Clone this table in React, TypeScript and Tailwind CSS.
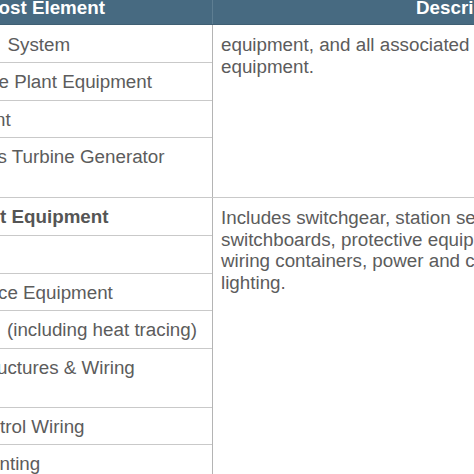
import React from "react";

type Row = { text: string; h: string; ml: string; pt: string; bold?: boolean };

const group1: Row[] = [
  { text: "System", h: "h-[38px]", ml: "ml-[7.5px]", pt: "pt-[9px]" },
  { text: "e Plant Equipment", h: "h-[38px]", ml: "ml-[-1.5px]", pt: "pt-[8px]" },
  { text: "nt", h: "h-[37px]", ml: "ml-[-5px]", pt: "pt-[8px]" },
  { text: "s Turbine Generator", h: "h-[59px]", ml: "ml-[-2.5px]", pt: "pt-[8px]" },
];

const group2: Row[] = [
  { text: "t Equipment", h: "h-[38px]", ml: "ml-[0px]", pt: "pt-[8px]", bold: true },
  { text: "", h: "h-[38px]", ml: "ml-[0px]", pt: "pt-[8px]" },
  { text: "ce Equipment", h: "h-[37px]", ml: "ml-[-2px]", pt: "pt-[8px]" },
  { text: "(including heat tracing)", h: "h-[38px]", ml: "ml-[7px]", pt: "pt-[8px]" },
  { text: "uctures & Wiring", h: "h-[59px]", ml: "ml-[-3px]", pt: "pt-[8px]" },
  { text: "trol Wiring", h: "h-[37px]", ml: "ml-[0px]", pt: "pt-[8px]" },
  { text: "nting", h: "h-[60px]", ml: "ml-[-0.5px]", pt: "pt-[8px]" },
];

function LeftRows({ rows, last }: { rows: Row[]; last?: boolean }) {
  return (
    <div className="w-[213px] shrink-0 border-r border-[#b4b4b4] overflow-hidden">
      {rows.map((r, i) => (
        <div
          key={i}
          className={`${r.h} ${r.pt} ${
            last && i === rows.length - 1 ? "" : "border-b border-[#c9c9c9]"
          } overflow-hidden`}
        >
          <div
            className={`${r.ml} whitespace-nowrap ${
              r.bold ? "font-bold text-[#555555]" : "text-[#5c5c5c]"
            }`}
          >
            {r.text}
          </div>
        </div>
      ))}
    </div>
  );
}

export default function App() {
  return (
    <div
      className="w-[474px] h-[474px] overflow-hidden bg-white text-[18.8px] leading-[21.6px]"
      style={{ fontFamily: '"Liberation Sans", Arial, sans-serif' }}
    >
      {/* header */}
      <div className="flex h-[25px] bg-[#476a81] border-b border-[#3f5f73]">
        <div className="w-[213px] shrink-0 border-r border-[#5e7e92] overflow-hidden">
          <div className="mt-[-3px] ml-[-1.5px] whitespace-nowrap font-bold text-white">
            ost Element
          </div>
        </div>
        <div className="flex-1 overflow-hidden">
          <div className="mt-[-3px] pl-[203px] whitespace-nowrap font-bold text-white">
            Description
          </div>
        </div>
      </div>

      {/* group 1 */}
      <div className="flex border-b border-[#c9c9c9]">
        <LeftRows rows={group1} last />
        <div className="flex-1 overflow-hidden pl-[8px] pt-[9px] text-[#5c5c5c] whitespace-nowrap">
          equipment, and all associated
          <br />
          equipment.
        </div>
      </div>

      {/* group 2 */}
      <div className="flex">
        <LeftRows rows={group2} last />
        <div className="flex-1 overflow-hidden pl-[8px] pt-[9px] text-[#5c5c5c] whitespace-nowrap">
          Includes switchgear, station service equipment,
          <br />
          switchboards, protective equipment,
          <br />
          wiring containers, power and control wiring, and
          <br />
          lighting.
        </div>
      </div>
    </div>
  );
}
